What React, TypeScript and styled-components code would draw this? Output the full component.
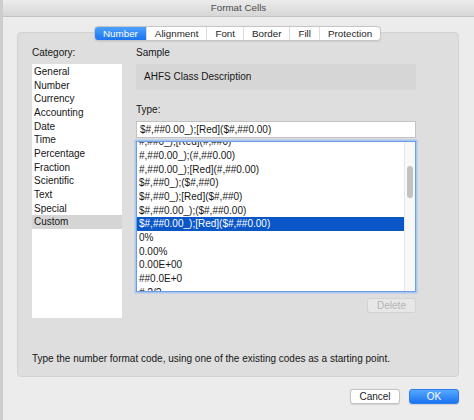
import * as React from 'react';
import styled, { createGlobalStyle } from 'styled-components';

const TABS = ['Number', 'Alignment', 'Font', 'Border', 'Fill', 'Protection'];

const CATEGORIES = [
  'General',
  'Number',
  'Currency',
  'Accounting',
  'Date',
  'Time',
  'Percentage',
  'Fraction',
  'Scientific',
  'Text',
  'Special',
  'Custom',
];

const FORMATS = [
  '#,##0_);[Red](#,##0)',
  '#,##0.00_);(#,##0.00)',
  '#,##0.00_);[Red](#,##0.00)',
  '$#,##0_);($#,##0)',
  '$#,##0_);[Red]($#,##0)',
  '$#,##0.00_);($#,##0.00)',
  '$#,##0.00_);[Red]($#,##0.00)',
  '0%',
  '0.00%',
  '0.00E+00',
  '##0.0E+0',
  '# ?/?',
];

const SELECTED_FORMAT = '$#,##0.00_);[Red]($#,##0.00)';

function App() {
  return (
    <>
      <GlobalStyle />
      <Window>
        <TitleBar>Format Cells</TitleBar>
        <TabRow>
          <TabGroup>
            {TABS.map((tab) => (
              <Tab key={tab} $active={tab === 'Number'}>
                {tab}
              </Tab>
            ))}
          </TabGroup>
        </TabRow>
        <Panel>
          <Columns>
            <Column>
              <Label>Category:</Label>
              <CategoryList>
                {CATEGORIES.map((cat) => (
                  <CategoryItem key={cat} $selected={cat === 'Custom'}>
                    {cat}
                  </CategoryItem>
                ))}
              </CategoryList>
            </Column>
            <Column>
              <Label>Sample</Label>
              <SampleBox>AHFS Class Description</SampleBox>
              <Label $spaced>Type:</Label>
              <TypeInput readOnly value={SELECTED_FORMAT} />
              <FormatList>
                <FormatRows>
                  {FORMATS.map((fmt) => (
                    <FormatRow key={fmt} $selected={fmt === SELECTED_FORMAT}>
                      {fmt}
                    </FormatRow>
                  ))}
                </FormatRows>
                <ScrollTrack>
                  <ScrollThumb />
                </ScrollTrack>
              </FormatList>
              <DeleteRow>
                <SmallButton disabled>Delete</SmallButton>
              </DeleteRow>
            </Column>
          </Columns>
          <HelpText>
            Type the number format code, using one of the existing codes as a
            starting point.
          </HelpText>
        </Panel>
        <Footer>
          <DialogButton>Cancel</DialogButton>
          <DialogButton $primary>OK</DialogButton>
        </Footer>
      </Window>
    </>
  );
}

const GlobalStyle = createGlobalStyle`
  * {
    box-sizing: border-box;
  }
  html, body {
    margin: 0;
    padding: 0;
    background: #cdcdcd;
  }
  body {
    font-family: 'Liberation Sans', Arial, sans-serif;
    font-size: 10px;
    color: #161616;
  }
`;

const Window = styled.div`
  margin-left: 3px;
  width: 471px;
  height: 420px;
  background: #ececec;
  display: flex;
  flex-direction: column;
  padding-bottom: 16px;
`;

const TitleBar = styled.div`
  height: 17px;
  display: flex;
  align-items: center;
  justify-content: center;
  background: linear-gradient(#ececec, #d6d6d6);
  border-bottom: 1px solid #c2c2c2;
  color: #4b4b4b;
  font-size: 9.8px;
`;

const TabRow = styled.div`
  display: flex;
  padding-left: 91px;
  margin-top: 9px;
  position: relative;
  z-index: 1;
`;

const TabGroup = styled.div`
  display: flex;
  height: 15px;
  background: #ffffff;
  border: 1px solid #c6c6c6;
  border-radius: 4px;
  overflow: hidden;
  box-shadow: 0 0.5px 1px rgba(0, 0, 0, 0.08);
`;

const Tab = styled.div<{ $active?: boolean }>`
  display: flex;
  align-items: center;
  padding: 0 8px;
  line-height: 1;
  font-size: 9.8px;
  color: ${(p) => (p.$active ? '#ffffff' : '#1e1e1e')};
  background: ${(p) =>
    p.$active ? 'linear-gradient(#4da1fb, #1b74ef)' : 'transparent'};
  & + & {
    border-left: 1px solid #dcdcdc;
  }
`;

const Panel = styled.div`
  margin: -9px 15px 0 14px;
  height: 346px;
  background: #dedede;
  border: 1px solid #d3d3d3;
  border-radius: 4px;
  padding: 14px 0 11px 14px;
  display: flex;
  flex-direction: column;
`;

const Columns = styled.div`
  display: grid;
  grid-template-columns: 90px 280px;
  column-gap: 14px;
`;

const Column = styled.div`
  display: flex;
  flex-direction: column;
`;

const Label = styled.div<{ $spaced?: boolean }>`
  height: 12px;
  line-height: 12px;
  margin-top: ${(p) => (p.$spaced ? '14px' : '0')};
  margin-bottom: 5px;
`;

const CategoryList = styled.div`
  height: 254px;
  background: #ffffff;
  padding-top: 1px;
`;

const CategoryItem = styled.div<{ $selected?: boolean }>`
  height: 13.67px;
  line-height: 13.67px;
  padding-left: 2px;
  background: ${(p) => (p.$selected ? '#d5d5d5' : 'transparent')};
`;

const SampleBox = styled.div`
  height: 26px;
  display: flex;
  align-items: center;
  padding-left: 8px;
  background: #d6d6d6;
`;

const TypeInput = styled.input`
  height: 17px;
  margin: 0;
  padding: 0 3px;
  border: 1px solid #c3c3c3;
  background: #ffffff;
  font: inherit;
  color: #161616;
  outline: none;
`;

const FormatList = styled.div`
  margin-top: 3px;
  height: 151px;
  display: flex;
  background: #ffffff;
  border: 1px solid #6e9de2;
  box-shadow: 0 0 0 1.5px #a9c6f1;
  overflow: hidden;
`;

const FormatRows = styled.div`
  flex: 1;
  margin-top: -6.5px;
`;

const FormatRow = styled.div<{ $selected?: boolean }>`
  height: 13.67px;
  line-height: 13.67px;
  padding-left: 2px;
  white-space: nowrap;
  color: ${(p) => (p.$selected ? '#ffffff' : '#161616')};
  background: ${(p) => (p.$selected ? '#0b57c8' : 'transparent')};
`;

const ScrollTrack = styled.div`
  width: 11px;
  background: #f8f8f8;
  border-left: 1px solid #e6e6e6;
  display: flex;
  flex-direction: column;
  align-items: center;
  padding-top: 24px;
`;

const ScrollThumb = styled.div`
  width: 6px;
  height: 32px;
  border-radius: 3px;
  background: #c2c2c2;
`;

const DeleteRow = styled.div`
  display: flex;
  justify-content: flex-end;
  margin-top: 6px;
`;

const SmallButton = styled.button`
  width: 49px;
  height: 15px;
  padding: 0;
  font: inherit;
  color: #b4b4b4;
  background: #e7e7e7;
  border: 1px solid #d2d2d2;
  border-radius: 3px;
`;

const HelpText = styled.div`
  margin-top: auto;
  line-height: 12px;
`;

const Footer = styled.div`
  display: flex;
  justify-content: flex-end;
  gap: 9px;
  margin-top: 12px;
  padding-right: 15px;
`;

const DialogButton = styled.button<{ $primary?: boolean }>`
  width: 50px;
  height: 15px;
  padding: 0;
  font: inherit;
  line-height: 1;
  border-radius: 3px;
  color: ${(p) => (p.$primary ? '#ffffff' : '#222222')};
  background: ${(p) =>
    p.$primary ? 'linear-gradient(#56a8fc, #1a74f1)' : '#ffffff'};
  border: 1px solid ${(p) => (p.$primary ? '#2a7ef0' : '#c4c4c4')};
  box-shadow: 0 0.5px 1px rgba(0, 0, 0, 0.12);
`;

export default App;
